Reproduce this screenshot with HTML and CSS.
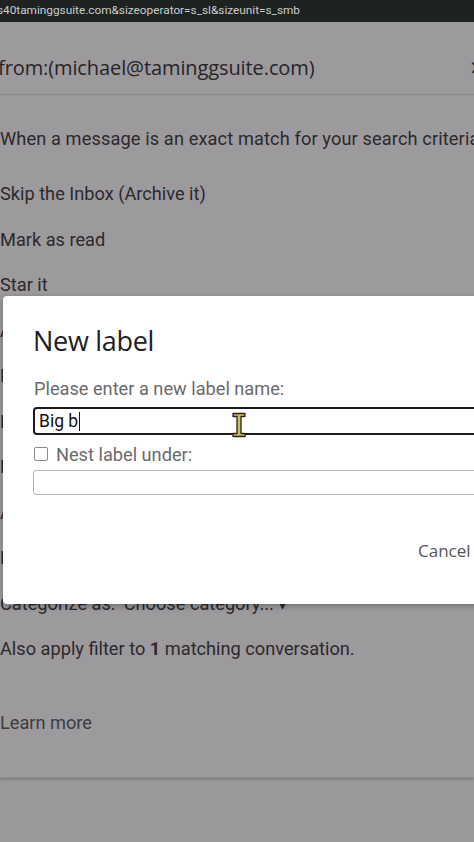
FILE: index.html
```html
<!DOCTYPE html>
<html>
<head>
<meta charset="utf-8">
<link rel="stylesheet" href="styles.css">
</head>
<body>
<div class="screen">
  <div class="urlbar">s40taminggsuite.com&amp;sizeoperator=s_sl&amp;sizeunit=s_smb</div>
  <div class="panel">
    <div class="panel-head">
      <span class="query">from:(michael@taminggsuite.com)</span>
      <span class="close">✕</span>
    </div>
    <div class="panel-body">
      <p class="intro">When a message is an exact match for your search criteria:</p>
      <div class="rows">
        <div class="row">Skip the Inbox (Archive it)</div>
        <div class="row">Mark as read</div>
        <div class="row">Star it</div>
        <div class="row">Apply the label: Choose label...</div>
        <div class="row">Forward it add forwarding address</div>
        <div class="row">Delete it</div>
        <div class="row">Never send it to Spam</div>
        <div class="row">Always mark it as important</div>
        <div class="row">Never mark it as important</div>
        <div class="row">Categorize as: <span class="choose">Choose category... ▾</span></div>
        <div class="row">Also apply filter to <b>1</b> matching conversation.</div>
      </div>
      <div class="learn">Learn more</div>
    </div>
  </div>
  <div class="below"></div>

  <div class="dialog">
    <h1 class="title">New label</h1>
    <div class="prompt">Please enter a new label name:</div>
    <div class="input"><span class="typed">Big b</span><span class="caret"></span></div>
    <label class="nest"><span class="box"></span><span>Nest label under:</span></label>
    <div class="select"></div>
    <div class="actions"><span class="cancel">Cancel</span></div>
  </div>

  <svg class="ibeam" width="16" height="26" viewBox="0 0 16 26">
    <path d="M2 1.5 H14 V4.5 H10 V21.5 H14 V24.5 H2 V21.5 H6 V4.5 H2 Z" fill="#cdbb66" stroke="#2a2410" stroke-width="1.3" stroke-linejoin="round"/>
  </svg>
</div>
</body>
</html>
```

FILE: styles.css
```css
html, body {
  margin: 0;
  padding: 0;
}
body {
  width: 474px;
  height: 842px;
  overflow: hidden;
  background: #9b989c;
  font-family: Roboto, "Liberation Sans", sans-serif;
}
.screen {
  position: relative;
  width: 474px;
  height: 842px;
  overflow: hidden;
}
.urlbar {
  height: 22px;
  background: #1e2322;
  color: #c9cccb;
  font-size: 11.8px;
  line-height: 21px;
  white-space: nowrap;
  margin-left: -3px;
}
.panel {
  background: #9d9a9e;
  height: 755px;
  box-shadow: 0 1px 3px rgba(0,0,0,0.25);
  border-bottom: 1px solid #8f8c90;
}
.panel-head {
  height: 72px;
  border-bottom: 1px solid #8c898d;
  display: flex;
  align-items: center;
  justify-content: space-between;
  white-space: nowrap;
}
.query {
  font-family: "Open Sans", Roboto, sans-serif;
  font-size: 20px;
  color: #262426;
  margin-left: -2px;
  margin-top: 19px;
  letter-spacing: -0.1px;
}
.close {
  font-size: 20px;
  color: #333;
  margin-right: -12px;
  margin-top: 19px;
}
.panel-body {
  padding-top: 32px;
}
.intro {
  margin: 0;
  font-size: 18.2px;
  letter-spacing: 0.12px;
  line-height: 24px;
  color: #2b292b;
  white-space: nowrap;
}
.rows {
  margin-top: 31px;
  display: flex;
  flex-direction: column;
}
.row {
  height: 45.5px;
  line-height: 24px;
  font-size: 18.2px;
  color: #2b292b;
  white-space: nowrap;
}
.row b {
  font-weight: 700;
}
.choose {
  color: #2b292b;
  margin-left: 4px;
}
.learn {
  margin-top: 28px;
  font-size: 18.2px;
  line-height: 24px;
  color: #3d3b3d;
}
.below {
  height: 64px;
}
.dialog {
  position: absolute;
  left: 3px;
  top: 296px;
  width: 520px;
  height: 308px;
  background: #ffffff;
  border-radius: 4px;
  box-shadow: 0 2px 6px rgba(0,0,0,0.3);
  padding: 0 0 0 30px;
  box-sizing: border-box;
}
.title {
  margin: 0;
  padding-top: 27px;
  font-family: "Open Sans", Roboto, sans-serif;
  font-weight: 400;
  font-size: 27px;
  line-height: 36px;
  color: #202124;
  letter-spacing: -0.3px;
}
.prompt {
  margin-top: 19px;
  font-size: 18.2px;
  line-height: 22px;
  color: #6a6a6a;
  padding-left: 1px;
}
.input {
  margin-top: 7px;
  height: 24px;
  border: 2px solid #1a1a1a;
  border-radius: 4px;
  display: flex;
  align-items: center;
  padding-left: 4px;
}
.typed {
  font-size: 17.5px;
  color: #111;
}
.caret {
  display: inline-block;
  width: 1px;
  height: 19px;
  background: #111;
  margin-left: 1px;
}
.nest {
  margin-top: 8px;
  display: flex;
  align-items: center;
  gap: 8px;
  height: 22px;
  font-size: 18.2px;
  color: #6a6a6a;
}
.box {
  width: 12px;
  height: 12px;
  border: 1.5px solid #8a8a8a;
  border-radius: 2px;
  margin-left: 1px;
}
.select {
  margin-top: 5px;
  height: 23px;
  border: 1px solid #b4b4b4;
  border-radius: 3px;
}
.actions {
  margin-top: 44px;
  padding-left: 385px;
}
.cancel {
  font-family: "Open Sans", Roboto, sans-serif;
  font-size: 17px;
  color: #555;
  line-height: 24px;
}
.ibeam {
  position: absolute;
  left: 231px;
  top: 412px;
}
```
